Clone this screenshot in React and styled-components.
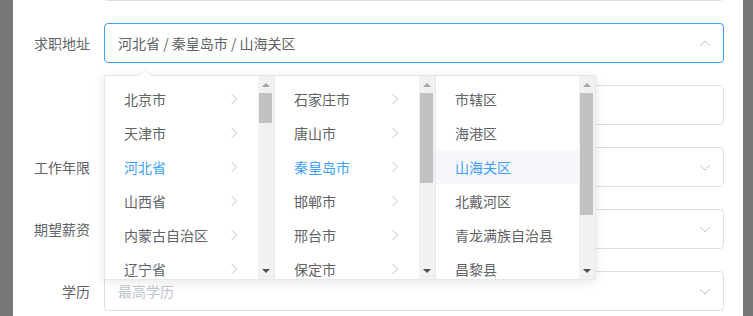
import React from 'react';
import styled, { createGlobalStyle } from 'styled-components';

const GlobalStyle = createGlobalStyle`
  body {
    margin: 0;
    background: #fff;
    font-family: "Noto Sans CJK SC", "Noto Sans", sans-serif;
  }
`;

const Page = styled.div`
  display: flex;
  width: 753px;
  height: 316px;
  overflow: hidden;
`;

const Strip = styled.div`
  flex: none;
  width: ${props => props.width}px;
  background: #787878;
`;

const Main = styled.div`
  flex: 1;
  padding-right: 19px;
  min-width: 0;
`;

const Form = styled.div`
  margin-top: -39px;
`;

const FormItem = styled.div`
  display: flex;
  align-items: center;
  height: 40px;
  margin-bottom: 22px;
`;

const Label = styled.label`
  flex: none;
  width: 91px;
  padding-right: 14px;
  box-sizing: border-box;
  text-align: right;
  color: #606266;
  font-size: 14px;
`;

const Field = styled.div`
  position: relative;
  flex: 1;
  height: 100%;
`;

const InputBox = styled.div`
  display: flex;
  align-items: center;
  height: 100%;
  box-sizing: border-box;
  padding: 0 12px 0 13px;
  border: 1px solid ${props => (props.focused ? '#409eff' : '#dcdfe6')};
  border-radius: 4px;
  background: #fff;
  font-size: 14px;
`;

const InputText = styled.span`
  flex: 1;
  color: ${props => (props.placeholder ? '#c0c4cc' : '#606266')};
`;

const Dropdown = styled.div`
  position: absolute;
  top: 52px;
  left: 0;
  z-index: 10;
  display: flex;
  height: 205px;
  box-sizing: border-box;
  border: 1px solid #e4e7ed;
  border-radius: 2px;
  background: #fff;
  box-shadow: 0 2px 12px 0 rgba(0, 0, 0, 0.1);
`;

const PopArrow = styled.div`
  position: absolute;
  top: -13px;
  left: 34px;
  width: 0;
  height: 0;
  border: 6px solid transparent;
  border-bottom-color: #e4e7ed;

  &::after {
    content: '';
    position: absolute;
    top: -5px;
    left: -6px;
    border: 6px solid transparent;
    border-bottom-color: #fff;
  }
`;

const Column = styled.div`
  display: flex;
  width: ${props => props.width}px;
  border-right: ${props => (props.last ? 'none' : '1px solid #e4e7ed')};
  overflow: hidden;
`;

const List = styled.ul`
  flex: 1;
  margin: 0;
  padding: 6px 0;
  list-style: none;
  overflow: hidden;
`;

const Node = styled.li`
  display: flex;
  align-items: center;
  height: 34px;
  padding: 0 20px 0 19px;
  font-size: 14px;
  color: ${props => (props.active ? '#409eff' : '#606266')};
  background: ${props => (props.hover ? '#f5f7fa' : 'transparent')};
  white-space: nowrap;
`;

const NodeLabel = styled.span`
  flex: 1;
`;

const Track = styled.div`
  flex: none;
  display: flex;
  flex-direction: column;
  width: 16px;
  background: #f1f1f1;
`;

const TrackButton = styled.div`
  display: flex;
  align-items: center;
  justify-content: center;
  height: 17px;
`;

const Triangle = styled.div`
  width: 0;
  height: 0;
  border-left: 4px solid transparent;
  border-right: 4px solid transparent;
  ${props =>
    props.down
      ? 'border-top: 4px solid #505050;'
      : 'border-bottom: 4px solid #a3a3a3;'}
`;

const Thumb = styled.div`
  height: ${props => props.size}px;
  margin: 0 2px 0 1px;
  background: #c1c1c1;
`;

const Spacer = styled.div`
  flex: 1;
`;

const ChevronRight = () => (
  <svg width="8" height="12" viewBox="0 0 8 12">
    <polyline points="1.5,1 6.5,6 1.5,11" fill="none" stroke="#c0c4cc" strokeWidth="1" />
  </svg>
);

const Chevron = ({ up }) => (
  <svg width="12" height="7" viewBox="0 0 12 7">
    <polyline
      points={up ? '1,6 6,1 11,6' : '1,1 6,6 11,1'}
      fill="none"
      stroke="#c0c4cc"
      strokeWidth="1"
    />
  </svg>
);

const Scrollbar = ({ thumb }) => (
  <Track>
    <TrackButton>
      <Triangle />
    </TrackButton>
    <Thumb size={thumb} />
    <Spacer />
    <TrackButton>
      <Triangle down />
    </TrackButton>
  </Track>
);

const columns = [
  {
    width: 169,
    thumb: 30,
    expand: true,
    items: ['北京市', '天津市', '河北省', '山西省', '内蒙古自治区', '辽宁省'],
    active: 2,
  },
  {
    width: 160,
    thumb: 90,
    expand: true,
    items: ['石家庄市', '唐山市', '秦皇岛市', '邯郸市', '邢台市', '保定市'],
    active: 2,
  },
  {
    width: 159,
    thumb: 122,
    expand: false,
    items: ['市辖区', '海港区', '山海关区', '北戴河区', '青龙满族自治县', '昌黎县'],
    active: 2,
    hover: 2,
  },
];

const Cascader = () => (
  <Dropdown>
    <PopArrow />
    {columns.map((col, ci) => (
      <Column key={ci} width={col.width} last={ci === columns.length - 1}>
        <List>
          {col.items.map((name, i) => (
            <Node key={name} active={i === col.active} hover={i === col.hover}>
              <NodeLabel>{name}</NodeLabel>
              {col.expand && <ChevronRight />}
            </Node>
          ))}
        </List>
        <Scrollbar thumb={col.thumb} />
      </Column>
    ))}
  </Dropdown>
);

export default function App() {
  return (
    <Page>
      <GlobalStyle />
      <Strip width={13} />
      <Main>
        <Form>
          <FormItem>
            <Label />
            <Field>
              <InputBox />
            </Field>
          </FormItem>

          <FormItem>
            <Label>求职地址</Label>
            <Field>
              <InputBox focused>
                <InputText>河北省 / 秦皇岛市 / 山海关区</InputText>
                <Chevron up />
              </InputBox>
              <Cascader />
            </Field>
          </FormItem>

          <FormItem>
            <Label />
            <Field>
              <InputBox />
            </Field>
          </FormItem>

          <FormItem>
            <Label>工作年限</Label>
            <Field>
              <InputBox>
                <InputText />
                <Chevron />
              </InputBox>
            </Field>
          </FormItem>

          <FormItem>
            <Label>期望薪资</Label>
            <Field>
              <InputBox>
                <InputText />
                <Chevron />
              </InputBox>
            </Field>
          </FormItem>

          <FormItem>
            <Label>学历</Label>
            <Field>
              <InputBox>
                <InputText placeholder>最高学历</InputText>
                <Chevron />
              </InputBox>
            </Field>
          </FormItem>
        </Form>
      </Main>
      <Strip width={10} />
    </Page>
  );
}
